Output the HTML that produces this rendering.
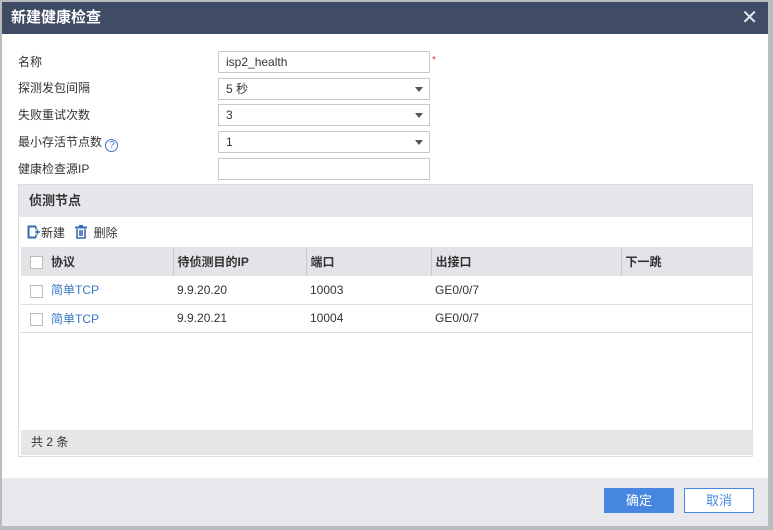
<!DOCTYPE html>
<html><head><meta charset="utf-8"><style>
*{box-sizing:border-box;margin:0;padding:0}
body{width:773px;height:530px;background:#b9bbbf;font-family:"Liberation Sans","Noto Sans CJK SC",sans-serif;font-size:12px;color:#333;position:relative;overflow:hidden}
.dlg{position:absolute;left:2px;top:2px;width:766px;height:524px;background:#fff}
.hd{position:absolute;left:0;top:0;width:766px;height:32px;background:#404b66;color:#fff;font-size:15px;font-weight:bold;line-height:32px;padding-left:9px}
.x{position:absolute;right:10px;top:0;color:#e6e8ee;font-size:20px;font-weight:normal}
.lb{position:absolute;left:16px;font-size:12px;color:#333}
.in{position:absolute;left:216px;width:212px;height:22px;border:1px solid #c8c8c8;background:#fff;padding-left:7px;line-height:20px;font-size:12px}
.arr{position:absolute;right:6px;top:8px;width:0;height:0;border-left:4px solid transparent;border-right:4px solid transparent;border-top:5px solid #555}
.panel{position:absolute;left:16px;top:182px;width:735px;height:273px;border:1px solid #dcdcdc;background:#fff}
.ph{height:32px;background:#e6e7eb;font-weight:bold;line-height:32px;padding-left:10px;font-size:13px}
.tb{position:absolute;left:8px;top:39px;font-size:12px}
table{position:absolute;left:2px;top:62px;width:732px;border-collapse:collapse}
th{height:29px;background:#e3e4e8;text-align:left;font-weight:bold;padding-left:4px;font-size:12px;position:relative}
td{height:28px;border-bottom:1px solid #dcdcdc;padding-left:4px}
.sep{border-left:1px solid #c8c8cc}
.cb{display:inline-block;width:13px;height:13px;border:1px solid #bbb;background:#fff;vertical-align:middle;margin:0 8px 0 9px}
.lnk{color:#3a78c3}
.pf{position:absolute;left:2px;top:245px;width:732px;height:25px;background:#e6e6e6;line-height:25px;padding-left:10px}
.ft{position:absolute;left:0;top:476px;width:766px;height:48px;background:#e8e9ec}
.b1{position:absolute;left:602px;top:10px;width:70px;height:25px;background:#4787e2;color:#fff;text-align:center;line-height:25px;font-size:13px}
.b2{position:absolute;left:682px;top:10px;width:70px;height:25px;border:1px solid #4787e2;background:#fff;color:#4787e2;text-align:center;line-height:23px;font-size:13px}
</style></head><body>
<div class="dlg">
<div class="hd">新建健康检查<span class="x">✕</span></div>
<div class="lb" style="top:51px">名称</div>
<div class="in" style="top:49px">isp2_health</div><span style="position:absolute;left:430px;top:53px;color:#d33;font-size:10px">*</span>
<div class="lb" style="top:77px">探测发包间隔</div>
<div class="in" style="top:76px">5 秒<span class="arr"></span></div>
<div class="lb" style="top:104px">失败重试次数</div>
<div class="in" style="top:102px">3<span class="arr"></span></div>
<div class="lb" style="top:131px">最小存活节点数 <span style="display:inline-block;width:13px;height:13px;border:1px solid #3a78c3;border-radius:50%;color:#3a78c3;font-size:10px;line-height:11px;text-align:center;vertical-align:-2px">?</span></div>
<div class="in" style="top:129px">1<span class="arr"></span></div>
<div class="lb" style="top:158px">健康检查源IP</div>
<div class="in" style="top:156px"></div>
<div class="panel">
<div class="ph">侦测节点</div>
<div class="tb"><svg width="14" height="14" style="vertical-align:-2px"><path d="M9 1.5H1.5v11H9" fill="none" stroke="#3a68b0" stroke-width="2"/><path d="M9 1.5v3M9 9.5v3M8 7h5M10.5 4.5v5" stroke="#3a68b0" stroke-width="1.5"/></svg>新建 &nbsp;&nbsp;<svg width="12" height="14" style="vertical-align:-2px"><path d="M0 2.5h12M4 1h4" stroke="#3a68b0" stroke-width="2"/><path d="M2 4v9h8V4M5 5v6M7 5v6" fill="none" stroke="#3a68b0" stroke-width="1.6"/></svg>&nbsp; 删除</div>
<table>
<tr><th style="width:152px;padding-left:0"><span class="cb"></span>协议</th><th class="sep" style="width:133px">待侦测目的IP</th><th class="sep" style="width:125px">端口</th><th class="sep" style="width:190px">出接口</th><th class="sep">下一跳</th></tr>
<tr><td style="padding-left:0"><span class="cb"></span><span class="lnk">简单TCP</span></td><td>9.9.20.20</td><td>10003</td><td>GE0/0/7</td><td></td></tr>
<tr><td style="padding-left:0"><span class="cb"></span><span class="lnk">简单TCP</span></td><td>9.9.20.21</td><td>10004</td><td>GE0/0/7</td><td></td></tr>
</table>
<div class="pf">共 2 条</div>
</div>
<div class="ft"><div class="b1">确定</div><div class="b2">取消</div></div>
</div>
</body></html>
